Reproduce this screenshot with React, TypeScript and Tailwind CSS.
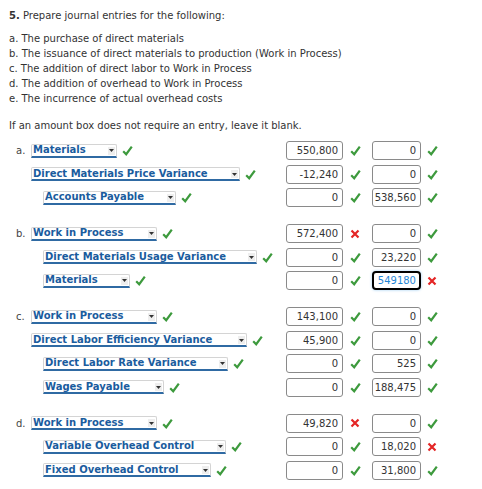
import React from "react";

type Mark = "ok" | "x" | "none";
type Row = {
  label?: string;
  indent: boolean;
  account: string;
  w: number;
  d: string;
  dm: Mark;
  c: string;
  cm: Mark;
  hl?: boolean;
};

const Check = () => (
  <svg width="11" height="11" viewBox="0 0 11 11" className="shrink-0">
    <path d="M1.2 6.2 L4.2 9.2 L9.8 1.6" fill="none" stroke="#3d9a3d" strokeWidth="2.2" strokeLinejoin="miter" />
  </svg>
);

const Cross = () => (
  <svg width="10" height="10" viewBox="0 0 10 10" className="shrink-0">
    <path d="M1.5 1.5 L8.5 8.5 M8.5 1.5 L1.5 8.5" fill="none" stroke="#e42525" strokeWidth="2.2" />
  </svg>
);

const MarkIcon = ({ m }: { m: Mark }) => (m === "ok" ? <Check /> : m === "x" ? <Cross /> : null);

const Dropdown = ({ text, w }: { text: string; w: number }) => (
  <div
    className="relative flex h-[14px] items-center rounded-t-[2px] border border-b-2 border-[#d4d4d4] border-b-[#2f6aa3] bg-white pl-[1px] font-bold text-[#1a5c9e]"
    style={{ width: w }}
  >
    <span className="whitespace-nowrap leading-none">{text}</span>
    <span className="absolute right-[1px] top-[2px] flex h-[8px] w-[7px] items-center justify-center bg-[#eeeeee]">
      <svg width="5" height="3" viewBox="0 0 5 3">
        <path d="M0 0 H5 L2.5 3 Z" fill="#333" />
      </svg>
    </span>
  </div>
);

const Box = ({ v, w, hl }: { v: string; w: number; hl?: boolean }) => (
  <div
    className={
      hl
        ? "flex h-[19px] items-center justify-end rounded-[4px] border-2 border-black bg-white pr-[3px] text-[#1f86d6] shadow-[0_0_3px_#9ccbf0]"
        : "flex h-[19px] items-center justify-end rounded-[3px] border border-[#8a8a8a] bg-white pr-[4px] text-[#333]"
    }
    style={{ width: w }}
  >
    {v}
  </div>
);

const sections: Row[][] = [
  [
    { label: "a.", indent: false, account: "Materials", w: 86, d: "550,800", dm: "ok", c: "0", cm: "ok" },
    { indent: false, account: "Direct Materials Price Variance", w: 209, d: "-12,240", dm: "ok", c: "0", cm: "ok" },
    { indent: true, account: "Accounts Payable", w: 133, d: "0", dm: "ok", c: "538,560", cm: "ok" },
  ],
  [
    { label: "b.", indent: false, account: "Work in Process", w: 126, d: "572,400", dm: "x", c: "0", cm: "ok" },
    { indent: true, account: "Direct Materials Usage Variance", w: 214, d: "0", dm: "ok", c: "23,220", cm: "ok" },
    { indent: true, account: "Materials", w: 87, d: "0", dm: "ok", c: "549180", cm: "x", hl: true },
  ],
  [
    { label: "c.", indent: false, account: "Work in Process", w: 126, d: "143,100", dm: "ok", c: "0", cm: "ok" },
    { indent: false, account: "Direct Labor Efficiency Variance", w: 216, d: "45,900", dm: "ok", c: "0", cm: "ok" },
    { indent: true, account: "Direct Labor Rate Variance", w: 185, d: "0", dm: "ok", c: "525", cm: "ok" },
    { indent: true, account: "Wages Payable", w: 121, d: "0", dm: "ok", c: "188,475", cm: "ok" },
  ],
  [
    { label: "d.", indent: false, account: "Work in Process", w: 126, d: "49,820", dm: "x", c: "0", cm: "ok" },
    { indent: true, account: "Variable Overhead Control", w: 183, d: "0", dm: "ok", c: "18,020", cm: "x" },
    { indent: true, account: "Fixed Overhead Control", w: 168, d: "0", dm: "ok", c: "31,800", cm: "ok" },
  ],
];

export default function App() {
  return (
    <div className="min-h-[489px] w-[482px] bg-white pl-[9px] pt-[8px] font-['DejaVu_Sans','Verdana',sans-serif] text-[10px] leading-[15px] text-[#333]">
      <p>
        <span className="font-bold">5.</span> Prepare journal entries for the following:
      </p>
      <div className="mt-[8px]">
        <p>a. The purchase of direct materials</p>
        <p>b. The issuance of direct materials to production (Work in Process)</p>
        <p>c. The addition of direct labor to Work in Process</p>
        <p>d. The addition of overhead to Work in Process</p>
        <p>e. The incurrence of actual overhead costs</p>
      </div>
      <p className="mt-[12px]">If an amount box does not require an entry, leave it blank.</p>

      <div className="mt-[8px] flex flex-col gap-[17px] pl-[7px]">
        {sections.map((rows, si) => (
          <div key={si} className="flex flex-col gap-[4.5px]">
            {rows.map((r, ri) => (
              <div key={ri} className="flex h-[19px] items-center">
                <div className="flex w-[270px] items-center">
                  <span className="w-[15px] shrink-0 text-[#444]">{r.label ?? ""}</span>
                  <div className={r.indent ? "ml-[12px] flex items-center gap-[5px]" : "flex items-center gap-[5px]"}>
                    <Dropdown text={r.account} w={r.w} />
                    <Check />
                  </div>
                </div>
                <Box v={r.d} w={57} />
                <div className="flex w-[29px] items-center pl-[7px]">
                  <MarkIcon m={r.dm} />
                </div>
                <Box v={r.c} w={49} hl={r.hl} />
                <div className="flex items-center pl-[6px]">
                  <MarkIcon m={r.cm} />
                </div>
              </div>
            ))}
          </div>
        ))}
      </div>
    </div>
  );
}
